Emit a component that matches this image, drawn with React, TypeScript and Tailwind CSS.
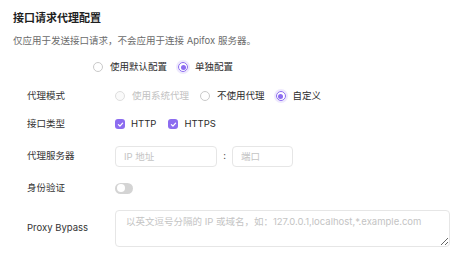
import React from "react";

const font = { fontFamily: '"Inter", "Noto Sans CJK SC", sans-serif' };

function Radio({ label, checked, disabled }: { label: string; checked?: boolean; disabled?: boolean }) {
    return (
        <label className="flex items-center gap-[7px]">
            {checked ? (
                <span className="w-[10px] h-[10px] rounded-full border border-[#8c6cf0] flex items-center justify-center shadow-[0_0_0_2px_rgba(140,108,240,0.15)]">
                    <span className="w-[5px] h-[5px] rounded-full bg-[#8c6cf0]" />
                </span>
            ) : (
                <span
                    className={
                        "w-[10px] h-[10px] rounded-full border " +
                        (disabled ? "border-[#dedede] bg-[#fafafa]" : "border-[#c9c9c9] bg-white")
                    }
                />
            )}
            <span className={"text-[9.5px] leading-none " + (disabled ? "text-[#c2c2c2]" : "text-[#2b2b2b]")}>
                {label}
            </span>
        </label>
    );
}

function Checkbox({ label }: { label: string }) {
    return (
        <label className="flex items-center gap-[6px]">
            <span className="w-[10px] h-[10px] rounded-[3px] bg-[#8c6cf0] flex items-center justify-center">
                <svg width="7" height="7" viewBox="0 0 10 10" fill="none">
                    <path d="M2 5.2L4.2 7.3L8 3" stroke="white" strokeWidth="1.8" strokeLinecap="round" strokeLinejoin="round" />
                </svg>
            </span>
            <span className="text-[9.5px] leading-none text-[#2b2b2b]">{label}</span>
        </label>
    );
}

function Row({ label, className, children }: { label: string; className: string; children: React.ReactNode }) {
    return (
        <div className={"flex items-center pl-[14px] " + className}>
            <div className="w-[88px] shrink-0 text-[9.5px] text-[#333]">{label}</div>
            {children}
        </div>
    );
}

export default function App() {
    return (
        <div className="w-[474px] h-[262px] bg-white pl-[13px] pt-[10px] overflow-hidden" style={font}>
            <div className="h-[16px] leading-[16px] text-[11px] font-semibold text-[#1f1f1f]">接口请求代理配置</div>
            <div className="mt-[7px] h-[16px] leading-[16px] text-[9.5px] text-[#6b6b6b]">
                仅应用于发送接口请求，不会应用于连接 Apifox 服务器。
            </div>

            <div className="mt-[8px] h-[20px] flex items-center gap-[11px] pl-[80px]">
                <Radio label="使用默认配置" />
                <Radio label="单独配置" checked />
            </div>

            <Row label="代理模式" className="mt-[9px] h-[20px]">
                <div className="flex items-center gap-[11px]">
                    <Radio label="使用系统代理" disabled />
                    <Radio label="不使用代理" />
                    <Radio label="自定义" checked />
                </div>
            </Row>

            <Row label="接口类型" className="mt-[8px] h-[20px]">
                <div className="flex items-center gap-[12px]">
                    <Checkbox label="HTTP" />
                    <Checkbox label="HTTPS" />
                </div>
            </Row>

            <Row label="代理服务器" className="mt-[12px] h-[21px]">
                <input
                    className="w-[102px] h-[21px] rounded-[4px] border border-[#e6e6e6] px-[8px] text-[9.5px] outline-none placeholder:text-[#c4c4c4]"
                    placeholder="IP 地址"
                />
                <span className="w-[15px] text-center text-[9.5px] text-[#555]">:</span>
                <input
                    className="w-[61px] h-[21px] rounded-[4px] border border-[#e6e6e6] px-[8px] text-[9.5px] outline-none placeholder:text-[#c4c4c4]"
                    placeholder="端口"
                />
            </Row>

            <Row label="身份验证" className="mt-[11px] h-[20px]">
                <span className="w-[18px] h-[11px] rounded-full bg-[#d4d4d4] flex items-center pl-[1.5px]">
                    <span className="w-[8px] h-[8px] rounded-full bg-white" />
                </span>
            </Row>

            <Row label="Proxy Bypass" className="mt-[12px] h-[37px]">
                <textarea
                    className="w-[335px] h-[37px] rounded-[4px] border border-[#e6e6e6] px-[10px] pt-[5px] text-[9.5px] leading-[12px] outline-none placeholder:text-[#c4c4c4]"
                    placeholder="以英文逗号分隔的 IP 或域名，如：127.0.0.1,localhost,*.example.com"
                />
            </Row>
        </div>
    );
}
